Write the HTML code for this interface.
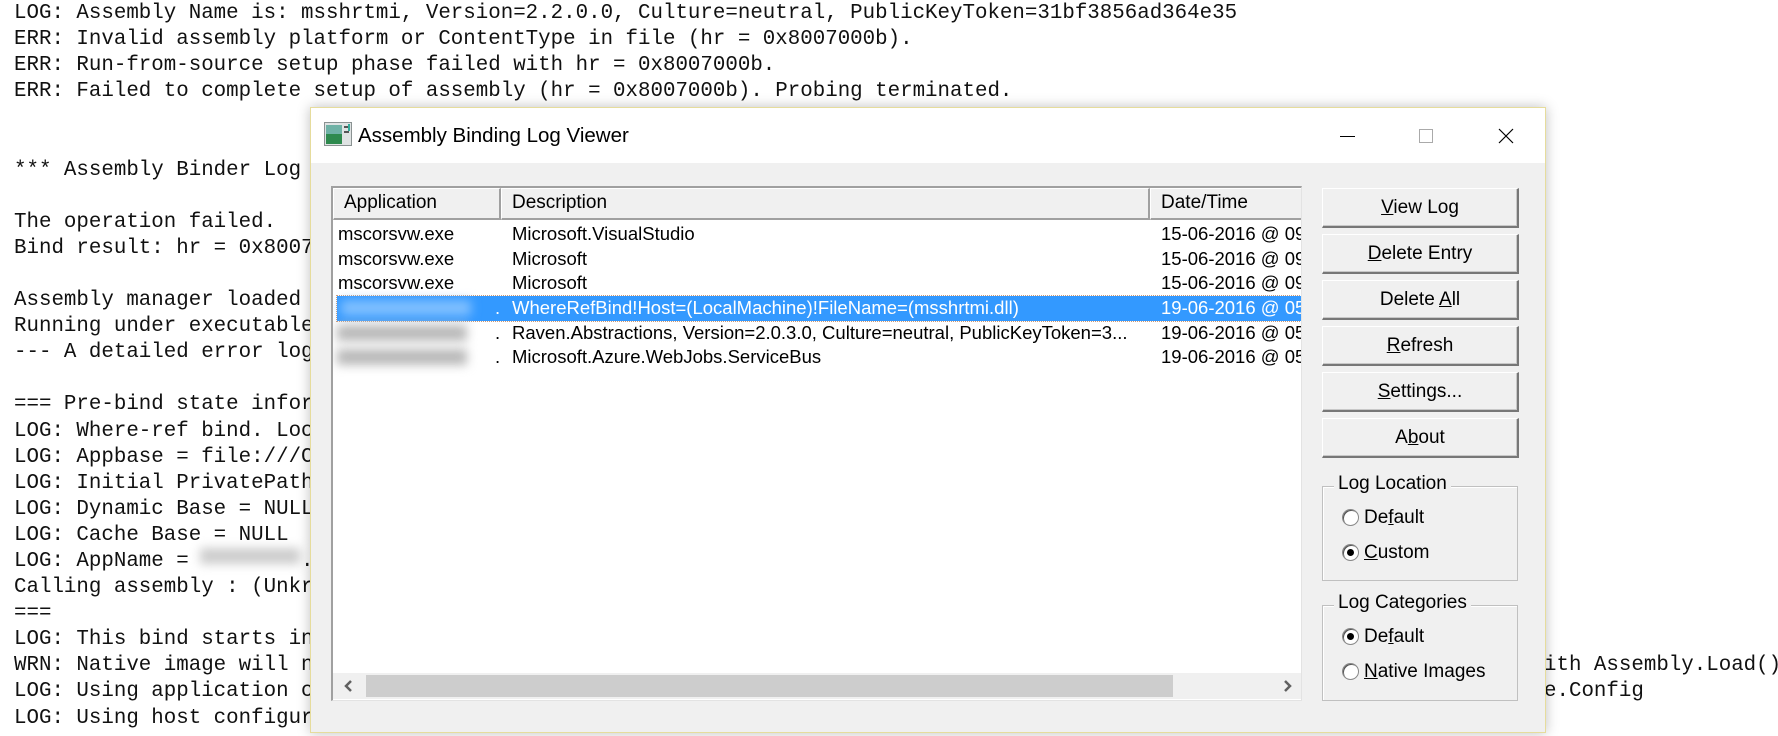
<!DOCTYPE html>
<html><head><meta charset="utf-8"><style>
*{margin:0;padding:0;box-sizing:border-box}
body{width:1778px;height:736px;background:#fff;position:relative;overflow:hidden;font-family:"Liberation Sans",sans-serif}
.con{position:absolute;left:14px;top:1px;font-family:"Liberation Mono",monospace;font-size:20.8px;line-height:26.1px;white-space:pre;color:#111}
.a{position:absolute}
.win{position:absolute;left:310px;top:107px;width:1236px;height:626px;background:#f0f0f0;border:1px solid #e6dc9c;box-shadow:0 0 12px rgba(0,0,0,.25)}
.tb{position:absolute;left:0;top:0;width:100%;height:55px;background:#fff}
.ui{font-size:19px;color:#000;white-space:nowrap}
.list{position:absolute;left:20px;top:78px;width:971px;height:515px;background:#fff;border-top:2px solid #a0a0a0;border-left:2px solid #a0a0a0;border-right:1px solid #e3e3e3;border-bottom:1px solid #e3e3e3;overflow:hidden}
.hd{position:absolute;top:0;height:32px;background:#f0f0f0;border-right:2px solid #a0a0a0;border-bottom:2px solid #a0a0a0;border-left:1px solid #fff;border-top:1px solid #fff;font-size:19px;line-height:28px;padding-left:10px;white-space:nowrap}
.row{position:absolute;left:0;width:980px;height:24.6px;font-size:18.5px;line-height:24px;white-space:nowrap}
.row span{position:absolute}
.blur{position:absolute;left:4px;top:4px;width:130px;height:16px;background:#b9b9b9;filter:blur(5px)}
.btn{position:absolute;left:1011px;width:197px;height:40px;background:#f0f0f0;border-top:1px solid #fff;border-left:1px solid #fff;border-right:2px solid #777;border-bottom:2px solid #777;box-shadow:inset -1px -1px 0 #c8c8c8;text-align:center;line-height:37px;font-size:19px}
.grp{position:absolute;left:1011px;width:196px;border:1px solid #c0c0c0;box-shadow:inset 1px 1px 0 #fff}
.gt{position:absolute;left:11px;top:-14px;background:#f0f0f0;padding:0 4px;font-size:19px}
.rad{position:absolute;left:19px;width:17px;height:17px;border-radius:50%;background:#fff;border:1px solid #888;box-shadow:inset 1px 1px 0 #555}
.rad.on::after{content:"";position:absolute;left:4px;top:4px;width:7px;height:7px;border-radius:50%;background:#000}
.rl{position:absolute;left:41px;font-size:19px}
u{text-decoration:underline}
</style></head><body>
<div class="con">LOG: Assembly Name is: msshrtmi, Version=2.2.0.0, Culture=neutral, PublicKeyToken=31bf3856ad364e35
ERR: Invalid assembly platform or ContentType in file (hr = 0x8007000b).
ERR: Run-from-source setup phase failed with hr = 0x8007000b.
ERR: Failed to complete setup of assembly (hr = 0x8007000b). Probing terminated.


*** Assembly Binder Log

The operation failed.
Bind result: hr = 0x8007

Assembly manager loaded
Running under executable
--- A detailed error log

=== Pre-bind state infor
LOG: Where-ref bind. Loc
LOG: Appbase = file:///C
LOG: Initial PrivatePath
LOG: Dynamic Base = NULL
LOG: Cache Base = NULL
LOG: AppName =         .
Calling assembly : (Unkr
===
LOG: This bind starts in
WRN: Native image will n
LOG: Using application c
LOG: Using host configur</div>
<div class="a" style="left:1544px;top:653px;font-family:'Liberation Mono',monospace;font-size:20.8px;line-height:26.1px;white-space:pre;color:#111">ith Assembly.Load()
e.Config</div>
<div class="a" style="left:200px;top:548px;width:100px;height:16px;background:#ccc;filter:blur(5px)"></div>

<div class="win">
 <div class="tb">
  <svg class="a" style="left:13px;top:14px" width="28" height="24" viewBox="0 0 28 24"><rect x="0.5" y="0.5" width="27" height="23" fill="#dfe3e3" stroke="#8a9292"/><rect x="2" y="3" width="16" height="19" fill="#2e8a4e"/><rect x="2" y="3" width="16" height="9" fill="#6fb2a6"/><rect x="20" y="4" width="5" height="2" fill="#555"/><rect x="20" y="9" width="5" height="2" fill="#555"/><rect x="24" y="2" width="2" height="7" fill="#3a9"/></svg>
  <div class="a ui" style="left:47px;top:16px;font-size:20.5px">Assembly Binding Log Viewer</div>
  <div class="a" style="left:1029px;top:28px;width:15px;height:1px;background:#000"></div>
  <div class="a" style="left:1108px;top:21px;width:14px;height:14px;border:1px solid #aaa"></div>
  <svg class="a" style="left:1187px;top:20px" width="16" height="16"><path d="M1 1L15 15M15 1L1 15" stroke="#000" stroke-width="1.2"/></svg>
 </div>
 <div class="list">
  <div class="hd" style="left:0;width:168px">Application</div>
  <div class="hd" style="left:168px;width:649px">Description</div>
  <div class="hd" style="left:817px;width:200px">Date/Time</div>
  <div class="row" style="top:34px"><span style="left:5px">mscorsvw.exe</span><span style="left:179px">Microsoft.VisualStudio</span><span style="left:828px">15-06-2016 @ 09</span></div>
  <div class="row" style="top:58.6px"><span style="left:5px">mscorsvw.exe</span><span style="left:179px">Microsoft</span><span style="left:828px">15-06-2016 @ 09</span></div>
  <div class="row" style="top:83.2px"><span style="left:5px">mscorsvw.exe</span><span style="left:179px">Microsoft</span><span style="left:828px">15-06-2016 @ 09</span></div>
  <div class="row" style="top:108px;left:4px;background:#3399ff;color:#fff;outline:1px dotted #c97"><div class="blur" style="background:#7fbfff"></div><span style="left:158px">.</span><span style="left:175px">WhereRefBind!Host=(LocalMachine)!FileName=(msshrtmi.dll)</span><span style="left:824px">19-06-2016 @ 05</span></div>
  <div class="row" style="top:132.6px"><div class="blur"></div><span style="left:162px">.</span><span style="left:179px">Raven.Abstractions, Version=2.0.3.0, Culture=neutral, PublicKeyToken=3...</span><span style="left:828px">19-06-2016 @ 05</span></div>
  <div class="row" style="top:157.2px"><div class="blur"></div><span style="left:162px">.</span><span style="left:179px">Microsoft.Azure.WebJobs.ServiceBus</span><span style="left:828px">19-06-2016 @ 05</span></div>
  <div class="a" style="left:0;top:485px;width:971px;height:26px;background:#f0f0f0"></div>
  <div class="a" style="left:33px;top:487px;width:807px;height:22px;background:#cdcdcd"></div>
  <svg class="a" style="left:10px;top:491px" width="12" height="14"><path d="M8 2L3 7L8 12" fill="none" stroke="#606060" stroke-width="2.5"/></svg>
  <svg class="a" style="left:948px;top:491px" width="12" height="14"><path d="M4 2L9 7L4 12" fill="none" stroke="#606060" stroke-width="2.5"/></svg>
 </div>
 <div class="btn" style="top:80px"><u>V</u>iew Log</div>
 <div class="btn" style="top:126px"><u>D</u>elete Entry</div>
 <div class="btn" style="top:172px">Delete <u>A</u>ll</div>
 <div class="btn" style="top:218px"><u>R</u>efresh</div>
 <div class="btn" style="top:264px"><u>S</u>ettings...</div>
 <div class="btn" style="top:310px">A<u>b</u>out</div>
 <div class="grp" style="top:378px;height:95px"><div class="gt">Log Location</div>
  <div class="rad" style="top:22px"></div><div class="rl" style="top:20px">De<u>f</u>ault</div>
  <div class="rad on" style="top:57px"></div><div class="rl" style="top:55px"><u>C</u>ustom</div></div>
 <div class="grp" style="top:497px;height:96px"><div class="gt">Log Categories</div>
  <div class="rad on" style="top:22px"></div><div class="rl" style="top:20px">De<u>f</u>ault</div>
  <div class="rad" style="top:57px"></div><div class="rl" style="top:55px"><u>N</u>ative Images</div></div>
</div>
</body></html>
